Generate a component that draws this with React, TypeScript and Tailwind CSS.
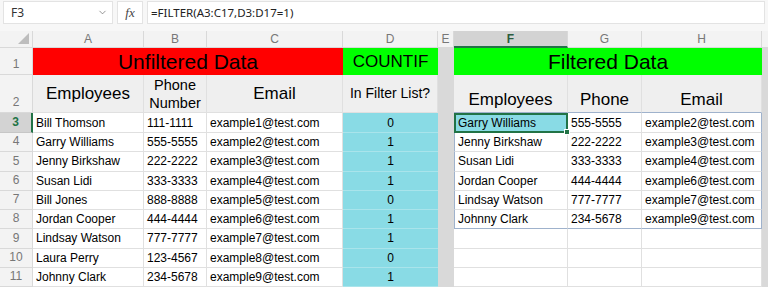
import React from 'react';
import { ChevronDown } from 'lucide-react';

const unfiltered: [string, string, string, number][] = [
  ['Bill Thomson', '111-1111', 'example1@test.com', 0],
  ['Garry Williams', '555-5555', 'example2@test.com', 1],
  ['Jenny Birkshaw', '222-2222', 'example3@test.com', 1],
  ['Susan Lidi', '333-3333', 'example4@test.com', 1],
  ['Bill Jones', '888-8888', 'example5@test.com', 0],
  ['Jordan Cooper', '444-4444', 'example6@test.com', 1],
  ['Lindsay Watson', '777-7777', 'example7@test.com', 1],
  ['Laura Perry', '123-4567', 'example8@test.com', 0],
  ['Johnny Clark', '234-5678', 'example9@test.com', 1],
];

const filtered = [
  ['Garry Williams', '555-5555', 'example2@test.com'],
  ['Jenny Birkshaw', '222-2222', 'example3@test.com'],
  ['Susan Lidi', '333-3333', 'example4@test.com'],
  ['Jordan Cooper', '444-4444', 'example6@test.com'],
  ['Lindsay Watson', '777-7777', 'example7@test.com'],
  ['Johnny Clark', '234-5678', 'example9@test.com'],
];

const letters = ['A', 'B', 'C', 'D', 'E', 'F', 'G', 'H'];

function FormulaBar() {
  return (
    <div className="h-[31px] flex items-start gap-[4px] px-[3px] pt-[1px] bg-[#f7f7f7] font-['Noto_Sans',sans-serif]">
      <div className="h-[23px] w-[110px] flex items-center justify-between bg-white border border-[#e3e3e3] pl-[7px] pr-[4px] text-[12px] text-[#333]">
        <span>F3</span>
        <ChevronDown className="w-[11px] h-[11px] text-[#666]" strokeWidth={1.5} />
      </div>
      <div className="h-[23px] w-[26px] flex items-center justify-center bg-white border border-[#e3e3e3] text-[13px] italic text-[#444] font-['Liberation_Serif',serif]">
        fx
      </div>
      <div className="h-[23px] flex-1 flex items-center bg-white border border-[#e3e3e3] pl-[3px] text-[11.5px] text-[#222]">
        =FILTER(A3:C17,D3:D17=1)
      </div>
    </div>
  );
}

function Sheet() {
  const grid = 'border-r border-b border-[#e0e0e0]';
  const rowHead = (n: number, active = false) => (
    <div
      key={'r' + n}
      className={
        active
          ? 'flex items-end justify-center pb-[1px] bg-[#d3d3d3] border-b border-r-2 border-r-[#217346] border-b-[#c6c6c6] text-[12px] text-[#217346] font-semibold'
          : 'flex items-end justify-center pb-[1px] bg-[#f3f3f3] border-b border-r border-[#d9d9d9] text-[12px] text-[#777]'
      }
    >
      {n}
    </div>
  );

  const rows: React.ReactNode[] = [];

  // column headers
  rows.push(
    <div key="corner" className="relative bg-[#f3f3f3] border-r border-b border-[#d9d9d9]">
      <div className="absolute right-[3px] bottom-[3px] w-0 h-0 border-l-[11px] border-l-transparent border-b-[11px] border-b-[#bdbdbd]" />
    </div>
  );
  letters.forEach((l) => {
    const active = l === 'F';
    rows.push(
      <div
        key={'c' + l}
        className={
          active
            ? 'flex items-center justify-center bg-[#d3d3d3] border-r border-[#d9d9d9] border-b-2 border-b-[#217346] text-[12px] text-[#2c5c3f] font-semibold'
            : 'flex items-center justify-center bg-[#f3f3f3] border-r border-b border-[#d9d9d9] text-[12px] text-[#777]'
        }
      >
        {l}
      </div>
    );
  });
  rows.push(<div key="cz" className="bg-[#f3f3f3] border-b border-[#d9d9d9]" />);

  // row 1
  rows.push(rowHead(1));
  rows.push(
    <div key="u1" className="col-span-3 flex items-center justify-center bg-[#ff0000] text-[21px] text-black">
      Unfiltered Data
    </div>
  );
  rows.push(
    <div key="d1" className="flex items-center justify-center bg-[#00ff00] text-[17px] text-black">
      COUNTIF
    </div>
  );
  rows.push(<div key="e1" className="bg-[#d9d9d9]" />);
  rows.push(
    <div key="f1" className="col-span-3 flex items-center justify-center bg-[#00ff00] text-[21px] text-black">
      Filtered Data
    </div>
  );
  rows.push(<div key="z1" className="bg-[#d9d9d9]" />);

  // row 2
  rows.push(rowHead(2));
  rows.push(
    <div key="a2" className={`${grid} flex items-center justify-center bg-[#efefef] text-[17px] text-black`}>
      Employees
    </div>
  );
  rows.push(
    <div key="b2" className={`${grid} flex items-center justify-center text-center leading-[18px] bg-[#efefef] text-[14.5px] text-black`}>
      Phone
      <br />
      Number
    </div>
  );
  rows.push(
    <div key="c2" className={`${grid} flex items-center justify-center bg-[#efefef] text-[17px] text-black`}>
      Email
    </div>
  );
  rows.push(
    <div key="d2" className={`${grid} flex items-center justify-center bg-[#efefef] text-[14px] text-black`}>
      In Filter List?
    </div>
  );
  rows.push(<div key="e2" className="bg-[#d9d9d9]" />);
  ['Employees', 'Phone', 'Email'].forEach((h) =>
    rows.push(
      <div
        key={'h2' + h}
        className="flex items-end justify-center pb-[3px] leading-[18px] bg-[#efefef] border-r border-r-[#e0e0e0] border-b border-b-[#9fb2cc] text-[17px] text-black"
      >
        {h}
      </div>
    )
  );
  rows.push(<div key="z2" className="bg-[#d9d9d9]" />);

  // data rows 3-11
  unfiltered.forEach((r, i) => {
    const n = i + 3;
    rows.push(rowHead(n, n === 3));
    rows.push(
      <div key={'a' + n} className={`${grid} flex items-center pl-[3px] bg-white`}>
        {r[0]}
      </div>
    );
    rows.push(
      <div key={'b' + n} className={`${grid} flex items-center pl-[3px] bg-white`}>
        {r[1]}
      </div>
    );
    rows.push(
      <div key={'c' + n} className={`${grid} flex items-center pl-[3px] bg-white`}>
        {r[2]}
      </div>
    );
    rows.push(
      <div key={'d' + n} className="flex items-center justify-center bg-[#89dbe5] border-b border-[#a9e4eb]">
        {r[3]}
      </div>
    );
    rows.push(<div key={'e' + n} className="bg-[#d9d9d9]" />);

    const f = filtered[i];
    const inSpill = i < filtered.length;
    const lastSpill = i === filtered.length - 1;
    const bottom = lastSpill ? 'border-b border-b-[#9fb2cc]' : 'border-b border-b-[#e0e0e0]';
    if (i === 0) {
      rows.push(
        <div
          key={'f' + n}
          className="relative flex items-center pl-[2px] bg-[#89dbe5] border-2 border-[#217346]"
        >
          {f[0]}
          <div className="absolute right-[-4px] bottom-[-4px] w-[6px] h-[6px] bg-[#217346] border border-white" />
        </div>
      );
    } else {
      rows.push(
        <div
          key={'f' + n}
          className={`flex items-center pl-[3px] bg-white border-r border-r-[#e0e0e0] ${inSpill ? 'border-l border-l-[#9fb2cc]' : ''} ${bottom}`}
        >
          {inSpill ? f[0] : ''}
        </div>
      );
    }
    rows.push(
      <div key={'g' + n} className={`flex items-center pl-[3px] bg-white border-r border-r-[#e0e0e0] ${bottom}`}>
        {inSpill ? f[1] : ''}
      </div>
    );
    rows.push(
      <div
        key={'h' + n}
        className={`flex items-center pl-[3px] bg-white border-r ${inSpill ? 'border-r-[#9fb2cc]' : 'border-r-[#e0e0e0]'} ${bottom}`}
      >
        {inSpill ? f[2] : ''}
      </div>
    );
    rows.push(<div key={'z' + n} className="bg-[#d9d9d9]" />);
  });

  return (
    <div className="grid grid-cols-[33px_111px_63px_136px_95px_16px_114px_74px_120px_6px] grid-rows-[17px_27px_38px_20px_repeat(8,19.25px)] font-['Liberation_Sans',Arial,sans-serif] text-[12px] text-black [&>div]:overflow-visible [&>div]:whitespace-nowrap">
      {rows}
    </div>
  );
}

export default function App() {
  return (
    <div className="w-[768px] h-[287px] overflow-hidden bg-white">
      <FormulaBar />
      <Sheet />
    </div>
  );
}
